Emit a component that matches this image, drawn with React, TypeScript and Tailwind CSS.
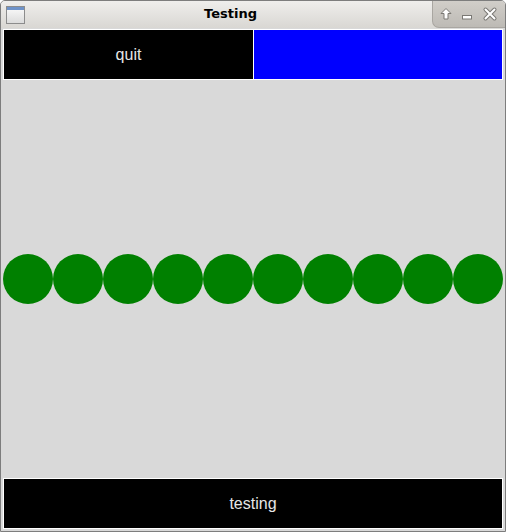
export default function App() {
  const circles = Array.from({ length: 10 }, (_, i) => i);

  return (
    <div className="w-[506px] h-[532px] flex flex-col bg-[#d9d9d9] border border-[#7d7d7d] rounded-t-[5px] overflow-hidden font-['Liberation_Sans',sans-serif]">
      {/* title bar */}
      <div className="h-[28px] flex items-stretch bg-gradient-to-b from-[#efeeec] to-[#d9d7d3]">
        <div className="w-[28px] flex items-start pt-[5px] pl-[5px]">
          <div className="w-[19px] h-[18px] border border-[#8c8c8c] bg-gradient-to-b from-[#fbfbfb] to-[#dcdcdc] flex flex-col">
            <div className="h-[3px] bg-[#6f93c9]" />
          </div>
        </div>
        <div className="flex-1 flex items-center justify-center pb-[1px] text-[13px] font-bold text-black font-['DejaVu_Sans',sans-serif]">
          Testing
        </div>
        <div className="w-[73px] flex items-center gap-[7px] pl-[6px] bg-gradient-to-b from-[#d1cec9] to-[#bdbab5] rounded-bl-[7px] border-l border-b border-[#a9a6a1]">
          <svg width="14" height="14" viewBox="0 0 14 14" className="shrink-0">
            <path d="M7 1.5 L12 6.5 L9 6.5 L9 12 L5 12 L5 6.5 L2 6.5 Z" fill="#ffffff" stroke="#7a7874" strokeWidth="1" strokeLinejoin="round" />
          </svg>
          <svg width="14" height="14" viewBox="0 0 14 14" className="shrink-0">
            <rect x="2.5" y="8.5" width="9" height="3.5" fill="#ffffff" stroke="#7a7874" strokeWidth="1" />
          </svg>
          <svg width="16" height="16" viewBox="0 0 16 16" className="shrink-0 ml-[1px]">
            <path d="M3.5 3.5 L12.5 12.5 M12.5 3.5 L3.5 12.5" stroke="#7a7874" strokeWidth="4" strokeLinecap="round" />
            <path d="M3.5 3.5 L12.5 12.5 M12.5 3.5 L3.5 12.5" stroke="#ffffff" strokeWidth="2" strokeLinecap="round" />
          </svg>
        </div>
      </div>

      {/* content */}
      <div className="flex-1 flex flex-col px-[2px] pt-[1px] pb-[2px]">
        <div className="w-[500px] h-[500px] flex flex-col">
          <div className="h-[51px] flex">
            <button className="w-[251px] h-full bg-black border border-white text-[16px] text-[#e6e6e6] flex items-center justify-center pt-[1px]">
              quit
            </button>
            <div className="w-[249px] h-full bg-[#0000ff] border-y border-r border-white" />
          </div>
          <div className="flex-1 flex items-center">
            {circles.map((i) => (
              <div key={i} className="w-[50px] h-[50px] rounded-full bg-[#008000]" />
            ))}
          </div>
          <button className="h-[51px] w-full bg-black border border-white text-[16px] text-[#e6e6e6] flex items-center justify-center">
            testing
          </button>
        </div>
      </div>
    </div>
  );
}
